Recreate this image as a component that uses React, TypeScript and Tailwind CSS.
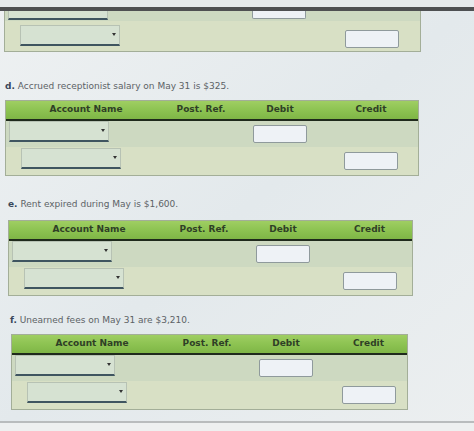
const font = "font-['DejaVu_Sans','Verdana',sans-serif]";

function Dropdown({ indent }: { indent?: boolean }) {
  return (
    <div
      className={`relative h-[21px] w-[100px] border border-[#b7c2b4] border-b-2 border-b-[#3f5560] bg-[#d6e2d2] ${indent ? "ml-[15px]" : "ml-[3px]"}`}
    >
      <span className="absolute right-[3px] top-[7px] h-0 w-0 border-x-[2.5px] border-t-[3px] border-x-transparent border-t-[#333]" />
    </div>
  );
}

function Box() {
  return <div className="h-[18px] w-[54px] rounded-[2px] border border-[#8f9a9c] bg-[#eef2f6]" />;
}

function Journal({ ml, width }: { ml: string; width: string }) {
  const cols = "grid grid-cols-[160px_70px_88px_1fr]";
  return (
    <div className={`${ml} ${width} border border-[#a3ae98] ${font}`}>
      <div className={`${cols} h-[20px] items-center border-b-2 border-b-[#1f2a1c] bg-gradient-to-b from-[#9fce62] via-[#8dc352] to-[#7fb646] text-[9px] font-bold text-[#2f3f26]`}>
        <span className="text-center">Account Name</span>
        <span className="text-center">Post. Ref.</span>
        <span className="text-center">Debit</span>
        <span className="text-center">Credit</span>
      </div>
      <div className={`${cols} h-[26px] bg-[#cdd9c1]`}>
        <div>
          <Dropdown />
        </div>
        <div />
        <div className="flex justify-center pt-[4px]">
          <Box />
        </div>
        <div />
      </div>
      <div className={`${cols} h-[28px] bg-[#d8e0c5]`}>
        <div className="pt-[1px]">
          <Dropdown indent />
        </div>
        <div />
        <div />
        <div className="flex justify-center pt-[5px]">
          <Box />
        </div>
      </div>
    </div>
  );
}

function Prompt({ letter, text, ml }: { letter: string; text: string; ml: string }) {
  return (
    <p className={`${ml} ${font} text-[9px] leading-[13px] text-[#5c6266]`}>
      <span className="font-bold text-[#39475a]">{letter}.</span> {text}
    </p>
  );
}

export default function App() {
  return (
    <div className="h-[431px] w-[474px] overflow-hidden bg-gradient-to-br from-[#eef1f2] via-[#e3e9ec] to-[#eceff0]">
      <div className="h-[7px] bg-[#e6eaec]" />
      <div className="h-[4px] bg-[#4e5052]" />

      {/* tail of previous entry */}
      <div className={`ml-[4px] w-[417px] border-x border-b border-[#a3ae98] ${font}`}>
        <div className="grid h-[10px] grid-cols-[160px_70px_88px_1fr] bg-[#cdd9c1]">
          <div className="ml-[3px] h-[9px] w-[100px] border-x border-b-2 border-[#b7c2b4] border-b-[#3f5560] bg-[#d6e2d2]" />
          <div />
          <div className="flex justify-center">
            <div className="h-[8px] w-[54px] rounded-b-[2px] border-x border-b border-[#8f9a9c] bg-[#eef2f6]" />
          </div>
          <div />
        </div>
        <div className="grid h-[30px] grid-cols-[160px_70px_88px_1fr] bg-[#d8e0c5]">
          <div className="pt-[4px]">
            <Dropdown indent />
          </div>
          <div />
          <div />
          <div className="flex justify-center pt-[9px]">
            <Box />
          </div>
        </div>
      </div>

      <div className="h-[28px]" />
      <Prompt ml="ml-[5px]" letter="d" text="Accrued receptionist salary on May 31 is $325." />
      <div className="h-[7px]" />
      <Journal ml="ml-[5px]" width="w-[414px]" />

      <div className="h-[22px]" />
      <Prompt ml="ml-[8px]" letter="e" text="Rent expired during May is $1,600." />
      <div className="h-[9px]" />
      <Journal ml="ml-[8px]" width="w-[405px]" />

      <div className="h-[18px]" />
      <Prompt ml="ml-[10px]" letter="f" text="Unearned fees on May 31 are $3,210." />
      <div className="h-[7px]" />
      <Journal ml="ml-[11px]" width="w-[397px]" />

      <div className="h-[11px]" />
      <div className="h-[2px] bg-[#b9bcbd]" />
      <div className="h-[30px] bg-[#eef0f0]" />
    </div>
  );
}
